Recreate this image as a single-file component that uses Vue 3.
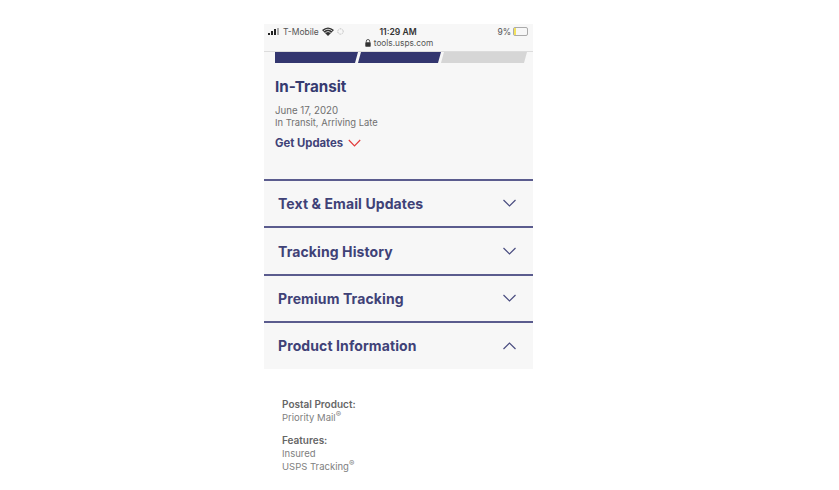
<script setup>
const rows = [
  { label: 'Text & Email Updates', open: false },
  { label: 'Tracking History', open: false },
  { label: 'Premium Tracking', open: false },
  { label: 'Product Information', open: true },
]
</script>

<template>
  <div class="page">
    <div class="phone">
      <header class="status">
        <div class="status-top">
          <div class="left">
            <span class="signal"><i class="b1"></i><i class="b2"></i><i class="b3"></i><i class="b4"></i></span>
            <span>T-Mobile</span>
            <svg class="wifi" width="12" height="9" viewBox="0 0 12 9"><path d="M6 9 L0 3 Q6 -2 12 3 Z" fill="#333"/><path d="M1.8 3.9 Q6 .6 10.2 3.9 M3.4 5.5 Q6 3.4 8.6 5.5" stroke="#f7f7f7" stroke-width=".8" fill="none"/></svg>
            <svg class="spin" width="7" height="7" viewBox="0 0 7 7"><circle cx="3.5" cy="3.5" r="2.7" stroke="#aaa" stroke-width=".8" stroke-dasharray="1 .7" fill="none"/></svg>
          </div>
          <div class="time">11:29 AM</div>
          <div class="right">
            <span>9%</span>
            <span class="battery"><i></i></span>
          </div>
        </div>
        <div class="url">
          <svg width="6" height="8" viewBox="0 0 6 8"><path d="M1.3 3.5V2.2a1.7 1.7 0 0 1 3.4 0v1.3" stroke="#333" fill="none" stroke-width=".8"/><rect x=".3" y="3.3" width="5.4" height="4.4" rx=".6" fill="#333"/></svg>
          <span>tools.usps.com</span>
        </div>
      </header>

      <div class="gray">
        <div class="progress">
          <span class="seg first"></span>
          <span class="seg"></span>
          <span class="seg off"></span>
        </div>

        <section class="hero">
          <h1>In-Transit</h1>
          <p class="date">June 17, 2020</p>
          <p class="desc">In Transit, Arriving Late</p>
          <div class="get">
            <span>Get Updates</span>
            <svg width="13" height="8" viewBox="0 0 13 8"><path d="M.8 1 L6.5 6.8 L12.2 1" stroke="#e23b3b" stroke-width="1.2" fill="none"/></svg>
          </div>
        </section>

        <div v-for="row in rows" :key="row.label" class="row">
          <span>{{ row.label }}</span>
          <svg width="15" height="9" viewBox="0 0 15 9">
            <path :d="row.open ? 'M1.5 8 L7.5 2 L13.5 8' : 'M1.5 1 L7.5 7 L13.5 1'" stroke="#4a4d80" stroke-width="1.2" fill="none"/>
          </svg>
        </div>
      </div>

      <section class="info">
        <div class="group">
          <h2>Postal Product:</h2>
          <p>Priority Mail<sup>®</sup></p>
        </div>
        <div class="group">
          <h2>Features:</h2>
          <p>Insured</p>
          <p>USPS Tracking<sup>®</sup></p>
        </div>
      </section>
    </div>
  </div>
</template>

<style scoped>
.page {
  width: 839px;
  height: 490px;
  overflow: hidden;
  background: #fff;
  padding: 24px 0 0 264px;
  box-sizing: border-box;
  font-family: Inter, "Liberation Sans", sans-serif;
}
.phone { width: 269px; }
.status {
  height: 28px;
  background: #f7f7f7;
  border-bottom: 1px solid #dcdcdc;
  box-sizing: border-box;
  color: #333;
  font-size: 8.5px;
  padding: 2px 3px 0 4px;
}
.status-top {
  display: grid;
  grid-template-columns: 1fr auto 1fr;
  align-items: center;
  height: 11px;
}
.left { display: flex; align-items: center; gap: 3px; color: #555; }
.signal { display: flex; align-items: flex-end; gap: 1px; height: 7px; margin-right: 1px; }
.signal i { width: 2px; background: #222; display: block; }
.b1 { height: 2px; }
.b2 { height: 4px; }
.b3 { height: 6px; }
.signal .b4 { height: 7px; background: #aaa; }
.time { font-weight: 600; font-size: 8.6px; color: #333; transform: translateX(-1px); }
.right { display: flex; justify-content: flex-end; align-items: center; gap: 2px; color: #555; }
.battery {
  width: 13px;
  height: 7px;
  border: 1px solid #aaa;
  border-radius: 2px;
  display: block;
  margin-right: 2px;
}
.battery i { display: block; width: 2px; height: 100%; background: #f2e15c; }
.url {
  display: flex;
  justify-content: center;
  align-items: center;
  gap: 3px;
  font-size: 8.3px;
  color: #555;
  margin-top: 1px;
}
.gray { background: #f7f7f7; }
.progress {
  display: flex;
  height: 11px;
  padding: 0 6px 0 11px;
}
.seg {
  flex: 0 0 83px;
  background: #33366f;
  clip-path: polygon(3px 0, 100% 0, calc(100% - 3px) 100%, 0 100%);
}
.seg.first { clip-path: polygon(0 0, 100% 0, calc(100% - 3px) 100%, 0 100%); }
.seg.off { flex: 1; background: #d6d6d6; }
.hero { height: 116px; padding: 14px 11px 0; box-sizing: border-box; }
h1 {
  margin: 0 0 8px;
  font-size: 15.2px;
  line-height: 20px;
  font-weight: 700;
  color: #363a70;
}
.date, .desc {
  margin: 0;
  font-size: 9.5px;
  line-height: 12px;
  color: #707070;
}
.date { font-size: 9.7px; }
.desc { font-size: 9.4px; }
.get {
  display: flex;
  align-items: center;
  gap: 5px;
  margin-top: 7px;
  font-size: 11.3px;
  font-weight: 700;
  color: #3f4277;
}
.row {
  height: 47.4px;
  box-sizing: border-box;
  border-top: 2px solid #5b5c8e;
  display: flex;
  align-items: center;
  justify-content: space-between;
  padding: 0 16px 0 14px;
  font-size: 14px;
  letter-spacing: .1px;
  font-weight: 700;
  color: #3f4277;
}
.info { padding: 29px 18px 0; color: #808080; }
.group { margin-bottom: 10px; }
h2 {
  margin: 0;
  font-size: 10px;
  line-height: 13px;
  font-weight: 600;
  color: #666;
}
.info p { margin: 0; font-size: 9.5px; line-height: 13px; }
sup { font-size: 8px; line-height: 0; }
</style>
